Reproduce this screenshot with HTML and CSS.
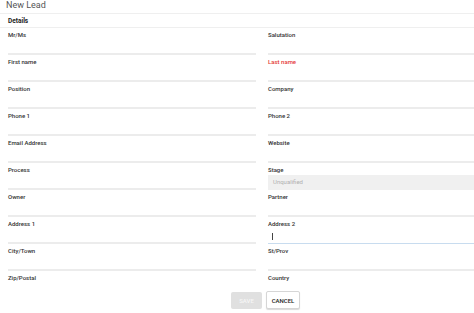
FILE: index.html
```html
<!DOCTYPE html>
<html lang="en">
<head>
    <meta charset="UTF-8">
    <meta name="viewport" content="width=device-width, initial-scale=1.0">
    <title>New Lead</title>
    <link rel="stylesheet" href="styles.css">
</head>
<body>
    <div class="page">
        <div class="title">New Lead</div>
        <div class="section">Details</div>

        <div class="form">
            <div class="field"><label>Mr/Ms</label><div class="input"></div></div>
            <div class="field"><label>Salutation</label><div class="input"></div></div>

            <div class="field"><label>First name</label><div class="input"></div></div>
            <div class="field required"><label>Last name</label><div class="input"></div></div>

            <div class="field"><label>Position</label><div class="input"></div></div>
            <div class="field"><label>Company</label><div class="input"></div></div>

            <div class="field"><label>Phone 1</label><div class="input"></div></div>
            <div class="field"><label>Phone 2</label><div class="input"></div></div>

            <div class="field"><label>Email Address</label><div class="input"></div></div>
            <div class="field"><label>Website</label><div class="input"></div></div>

            <div class="field"><label>Process</label><div class="input"></div></div>
            <div class="field disabled"><label>Stage</label><div class="input">Unqualified</div></div>

            <div class="field"><label>Owner</label><div class="input"></div></div>
            <div class="field"><label>Partner</label><div class="input"></div></div>

            <div class="field"><label>Address 1</label><div class="input"></div></div>
            <div class="field focused"><label>Address 2</label><div class="input"><span class="caret"></span></div></div>

            <div class="field"><label>City/Town</label><div class="input"></div></div>
            <div class="field"><label>St/Prov</label><div class="input"></div></div>

            <div class="field"><label>Zip/Postal</label><div class="input"></div></div>
            <div class="field"><label>Country</label><div class="input"></div></div>
        </div>

        <div class="actions">
            <button class="btn save">SAVE</button>
            <button class="btn cancel">CANCEL</button>
        </div>
    </div>
</body>
</html>
```

FILE: styles.css
```css
body {
    margin: 0;
    font-family: Roboto, "Liberation Sans", sans-serif;
    background: #fff;
    color: #333;
}
.page {
    height: 313px;
    display: flex;
    flex-direction: column;
    overflow: hidden;
}
.title {
    height: 13px;
    line-height: 11px;
    font-size: 9px;
    padding-left: 6px;
    color: #555;
    border-bottom: 1px solid #efefef;
    flex-shrink: 0;
}
.section {
    height: 13px;
    line-height: 14px;
    font-size: 6.5px;
    font-weight: 700;
    padding-left: 8px;
    color: #222;
    border-bottom: 1px solid #efefef;
    flex-shrink: 0;
}
.form {
    display: grid;
    grid-template-columns: 248px 1fr;
    column-gap: 12px;
    padding-left: 8px;
    flex: 1;
    overflow: hidden;
}
.field {
    padding-top: 2px;
}
.field label {
    display: block;
    height: 10px;
    line-height: 9px;
    font-size: 6px;
    font-weight: 500;
    color: #333;
}
.field .input {
    height: 13px;
    border-bottom: 2px solid #ececec;
    font-size: 6px;
    line-height: 13px;
}
.field.required label {
    color: #e53935;
}
.field.disabled .input {
    background: #f0f0f0;
    color: #b0b0b0;
    padding-left: 5px;
    border-bottom-color: #f0f0f0;
}
.field.focused .input {
    border-bottom: 1px solid #c8dcef;
    height: 14px;
    padding-left: 4px;
}
.caret {
    display: inline-block;
    width: 1px;
    height: 7px;
    margin-top: 4px;
    background: #444;
    vertical-align: top;
}
.actions {
    height: 22px;
    flex-shrink: 0;
    display: flex;
    align-items: flex-start;
    gap: 4px;
    padding-left: 231px;
    padding-top: 3px;
    background: #fff;
}
.btn {
    font-family: inherit;
    font-size: 6px;
    font-weight: 500;
    padding: 0;
    border-radius: 2px;
}
.btn.save {
    width: 31px;
    height: 17px;
    margin-top: 1px;
    background: #e0e0e0;
    color: #f6f6f6;
    border: none;
}
.btn.cancel {
    width: 34px;
    height: 18px;
    background: #fff;
    color: #222;
    border: 1px solid #d6d6d6;
    box-shadow: 0 1px 1px rgba(0, 0, 0, 0.15);
}
```
